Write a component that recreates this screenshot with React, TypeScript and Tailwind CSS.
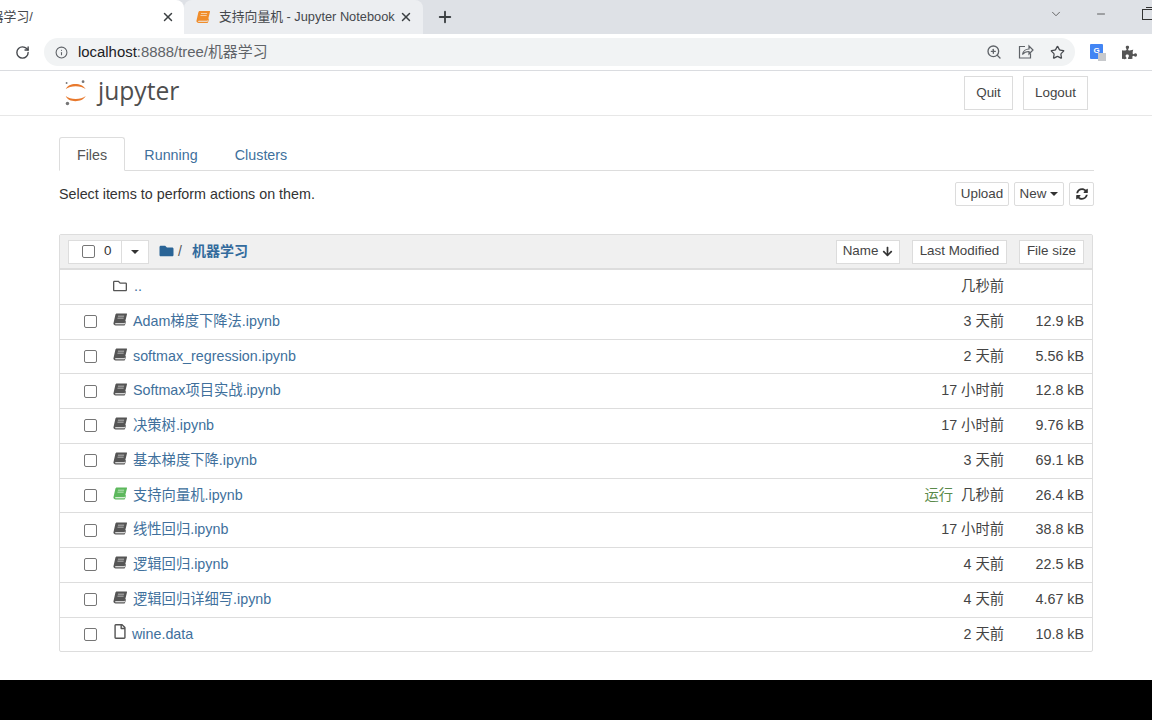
import React from 'react';
import { ChevronDown, Info, Minus, Plus, RotateCw, Star, X, ZoomIn } from 'lucide-react';
import { FaArrowDown, FaFolder, FaPuzzlePiece, FaRegFile, FaRegFolder, FaSyncAlt } from 'react-icons/fa';

const files = [
  { name: 'Adam梯度下降法.ipynb', modified: '3 天前', size: '12.9 kB' },
  { name: 'softmax_regression.ipynb', modified: '2 天前', size: '5.56 kB' },
  { name: 'Softmax项目实战.ipynb', modified: '17 小时前', size: '12.8 kB' },
  { name: '决策树.ipynb', modified: '17 小时前', size: '9.76 kB' },
  { name: '基本梯度下降.ipynb', modified: '3 天前', size: '69.1 kB' },
  { name: '支持向量机.ipynb', modified: '几秒前', size: '26.4 kB', running: true },
  { name: '线性回归.ipynb', modified: '17 小时前', size: '38.8 kB' },
  { name: '逻辑回归.ipynb', modified: '4 天前', size: '22.5 kB' },
  { name: '逻辑回归详细写.ipynb', modified: '4 天前', size: '4.67 kB' },
  { name: 'wine.data', modified: '2 天前', size: '10.8 kB', plain: true },
];

function BookIcon({ className }: { className: string }) {
  return (
    <svg viewBox="0 0 15 13" className={className} fill="currentColor">
      <path d="M4 0.2H14.4C14.9 0.2 15.1 0.6 15 1L12.8 9.6C12.7 10.1 12.3 10.4 11.8 10.4H3C2.3 10.4 2 10.9 2.3 11.3C2.5 11.6 2.9 11.7 3.3 11.7H12.4L13.4 8.2L14 8.6L12.9 12.2C12.8 12.6 12.5 12.8 12.1 12.8H2.8C1.3 12.8 0.2 11.8 0.5 10.4L2.5 1.8C2.7 0.8 3.3 0.2 4 0.2Z" />
      <path d="M5.4 2.6H12L11.8 3.3H5.2ZM4.9 4.6H11.5L11.3 5.3H4.7Z" fill="white" fillOpacity="0.75" />
    </svg>
  );
}

function JupyterLogo() {
  return (
    <svg viewBox="0 0 30 32" className="w-[26px] h-[32px]">
      <path d="M2 11.5C5 3.5 21 3.5 25 11.5C20 7 7 7 2 11.5Z" fill="#e8792d" />
      <path d="M2 19.5C5 27.5 21 27.5 25 19.5C20 24 7 24 2 19.5Z" fill="#e8792d" />
      <circle cx="22" cy="3" r="1.6" fill="#767677" />
      <circle cx="3" cy="4.5" r="1.1" fill="#767677" />
      <circle cx="4" cy="28" r="2" fill="#767677" />
    </svg>
  );
}

function Btn({ children, className = '' }: { children: React.ReactNode; className?: string }) {
  return (
    <div className={`flex items-center justify-center bg-white border border-[#dcdcdc] text-[#444] text-[13.4px] ${className}`}>
      {children}
    </div>
  );
}

function Check() {
  return <div className="w-[13px] h-[13px] rounded-[2px] border border-[#767676] bg-white" />;
}

function Row({ children }: { children: React.ReactNode }) {
  return <div className="h-[34.75px] flex items-center border-t border-[#dddddd] text-[14.3px] text-[#444] first:border-t-0">{children}</div>;
}

export default function App() {
  return (
    <div className="w-[1152px] h-[720px] overflow-hidden bg-white flex flex-col font-['Liberation_Sans','Noto_Sans_CJK_SC',sans-serif] text-[#333]">
      {/* Browser tabs */}
      <div className="h-[34px] shrink-0 flex bg-[#dee1e6] text-[12.8px] text-[#45484d]">
        <div className="w-[184px] bg-white rounded-tr-[8px] flex items-center justify-between pr-[9px]">
          <span className="-ml-[22px]">机器学习/</span>
          <X className="w-[14px] h-[14px] text-[#3c4043]" strokeWidth={2.5} />
        </div>
        <div className="w-[239px] bg-[#eceef1] rounded-t-[8px] flex items-center pl-[12px] pr-[10px]">
          <BookIcon className="w-[14px] h-[14px] text-[#f08d2b] shrink-0" />
          <span className="ml-[9px] flex-1 whitespace-nowrap">支持向量机 - Jupyter Notebook</span>
          <X className="w-[14px] h-[14px] text-[#3c4043]" strokeWidth={2.5} />
        </div>
        <div className="w-[44px] flex items-center justify-center">
          <Plus className="w-[18px] h-[18px] text-[#3c4043]" strokeWidth={2.5} />
        </div>
        <div className="flex-1 flex items-center justify-end pb-[6px]">
          <ChevronDown className="w-[14px] h-[14px] text-[#555]" strokeWidth={1.5} />
          <Minus className="w-[12px] h-[12px] ml-[32px] text-[#333]" strokeWidth={1.5} />
          <div className="relative w-[11px] h-[11px] ml-[35px] -mr-[1px] border border-[#333]">
            <div className="absolute -top-[3px] -right-[3px] w-[9px] h-[9px] border-t border-r border-[#333]" />
          </div>
        </div>
      </div>

      {/* Address bar */}
      <div className="h-[37px] shrink-0 flex items-center bg-white border-b border-[#dadce0]">
        <div className="w-[44px] flex justify-center">
          <RotateCw className="w-[15px] h-[15px] text-[#45484d]" strokeWidth={2.2} />
        </div>
        <div className="w-[1031px] h-[28px] rounded-full bg-[#f1f3f4] flex items-center pl-[11px] pr-[10px] text-[14.9px]">
          <Info className="w-[13px] h-[13px] text-[#5f6368]" strokeWidth={2} />
          <span className="ml-[10px] text-[#202124]">localhost</span>
          <span className="text-[#5f6368]">:8888/tree/机器学习</span>
          <div className="ml-auto flex items-center gap-[16px] text-[#5f6368]">
            <ZoomIn className="w-[16px] h-[16px]" strokeWidth={2} />
            <svg viewBox="0 0 16 16" className="w-[16px] h-[16px]" fill="none" stroke="currentColor" strokeWidth="1.2">
              <path d="M7 2.5H1.5V14H12.5V9.5M4.5 10.5C5 7 8 5 11 5V2L15 6L11 10V7.5C8.5 7.5 6 8.5 4.5 10.5Z" />
            </svg>
            <Star className="w-[15px] h-[15px] text-[#45484d]" strokeWidth={2} />
          </div>
        </div>
        <div className="ml-[15px] relative w-[16px] h-[17px]">
          <div className="w-[13px] h-[15px] rounded-[1px] bg-[#4285f4] text-white text-[8px] font-bold flex items-center justify-center">G</div>
          <div className="absolute right-0 bottom-0 w-[8px] h-[8px] bg-[#c7c9cc]" />
        </div>
        <FaPuzzlePiece className="ml-[16px] w-[15px] h-[15px] text-[#555]" />
      </div>

      {/* Jupyter header */}
      <div className="h-[45px] shrink-0 flex items-center border-b border-[#e7e7e7] pl-[64px] pr-[64px]">
        <JupyterLogo />
        <span className="ml-[8px] text-[24.6px] leading-none font-medium font-['Open_Sans',sans-serif] text-[#4e4e4e] -mt-[3px]">jupyter</span>
        <div className="ml-auto flex gap-[10px]">
          <Btn className="w-[49px] h-[34px]">Quit</Btn>
          <Btn className="w-[65px] h-[34px]">Logout</Btn>
        </div>
      </div>

      {/* Main */}
      <div className="flex-1 pl-[59px] pr-[58px] pt-[21px]">
        <div className="flex h-[34px] border-b border-[#dddddd] text-[14.3px] text-[#40709c]">
          <div className="w-[66px] h-[34px] flex items-center justify-center border border-b-white border-[#dddddd] rounded-t-[3px] text-[#555] bg-white pt-[4px]">Files</div>
          <div className="w-[92px] flex items-center justify-center pt-[5px]">Running</div>
          <div className="w-[88px] flex items-center justify-center pt-[5px]">Clusters</div>
        </div>
        <div className="h-[46px] flex items-center justify-between">
          <span className="text-[14.3px] pt-[2px]">Select items to perform actions on them.</span>
          <div className="flex gap-[5px]">
            <Btn className="w-[54px] h-[24px] rounded-[2px]">Upload</Btn>
            <Btn className="w-[50px] h-[24px] rounded-[2px]">
              New
              <span className="ml-[4px] border-x-[4px] border-x-transparent border-t-[4px] border-t-[#333]" />
            </Btn>
            <Btn className="w-[25px] h-[24px] rounded-[2px]"><FaSyncAlt className="w-[12px] h-[12px] text-[#333]" /></Btn>
          </div>
        </div>

        <div className="mt-[17px] border border-[#dddddd] rounded-[2px] mr-[1px]">
          {/* Breadcrumb + sort */}
          <div className="h-[34px] bg-[#f0f0f0] border-b border-[#dddddd] flex items-center pl-[8px] pr-[8px]">
            <div className="flex h-[24px] bg-white border border-[#dddddd]">
              <div className="w-[53px] flex items-center pl-[13px] border-r border-[#dddddd] text-[13.4px]">
                <Check />
                <span className="ml-[9px]">0</span>
              </div>
              <div className="w-[26px] flex items-center justify-center">
                <span className="border-x-[4.5px] border-x-transparent border-t-[4.5px] border-t-[#333]" />
              </div>
            </div>
            <FaFolder className="ml-[10px] -mt-[2px] w-[15px] h-[14px] text-[#2a6496]" />
            <span className="ml-[4px] text-[14px] text-[#555]">/</span>
            <span className="ml-[10px] text-[14px] font-bold text-[#336b9d]">机器学习</span>
            <div className="ml-auto flex gap-[12px]">
              <Btn className="w-[64px] h-[24px]">
                Name
                <FaArrowDown className="ml-[4px] w-[11px] h-[11px] text-[#333]" />
              </Btn>
              <Btn className="w-[95px] h-[24px]">Last Modified</Btn>
              <Btn className="w-[65px] h-[24px]">File size</Btn>
            </div>
          </div>

          {/* Parent */}
          <Row>
            <FaRegFolder className="ml-[53px] w-[14px] h-[14px] text-[#555] -mt-[2px]" />
            <span className="ml-[7px] text-[#40709c]">..</span>
            <span className="ml-auto mr-[88px]">几秒前</span>
          </Row>

          {files.map((f) => (
            <Row key={f.name}>
              <div className="ml-[23.5px]"><Check /></div>
              {f.plain ? (
                <FaRegFile className="ml-[16.5px] w-[14px] h-[15px] -mt-[6px] text-[#555]" />
              ) : (
                <BookIcon className={`ml-[16.5px] w-[14px] h-[13px] -mt-[4px] ${f.running ? 'text-[#5cb85c]' : 'text-[#555]'}`} />
              )}
              <span className={`${f.plain ? 'ml-[5px]' : 'ml-[6px]'} text-[#40709c]`}>{f.name}</span>
              {f.running && <span className="ml-auto text-[#5a8a4a]">运行</span>}
              <span className={`${f.running ? 'ml-[8px]' : 'ml-auto'} text-right`}>{f.modified}</span>
              <span className="w-[88px] pr-[8px] text-right">{f.size}</span>
            </Row>
          ))}
        </div>
      </div>

      {/* Black strip */}
      <div className="h-[40px] shrink-0 bg-black" />
    </div>
  );
}
